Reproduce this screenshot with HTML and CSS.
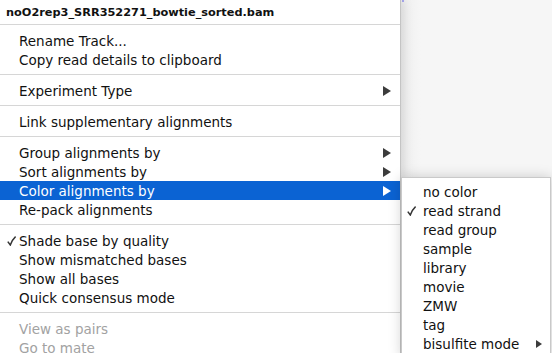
FILE: index.html
```html
<!DOCTYPE html>
<html>
	<head>
		<meta charset="UTF-8">
		<title>Track menu</title>
		<link rel="stylesheet" href="styles.css">
	</head>
	<body>
		<div class="screen">
			<div class="menu">
				<div class="title">noO2rep3_SRR352271_bowtie_sorted.bam</div>
				<div class="group">
					<div class="item">Rename Track...</div>
					<div class="item">Copy read details to clipboard</div>
				</div>
				<div class="sep"></div>
				<div class="group">
					<div class="item">Experiment Type<span class="arrow"></span></div>
				</div>
				<div class="sep"></div>
				<div class="group">
					<div class="item">Link supplementary alignments</div>
				</div>
				<div class="sep"></div>
				<div class="group">
					<div class="item">Group alignments by<span class="arrow"></span></div>
					<div class="item">Sort alignments by<span class="arrow"></span></div>
					<div class="item open">Color alignments by<span class="arrow"></span>
						<div class="submenu">
							<div class="item">no color</div>
							<div class="item"><span class="check"><svg width="9" height="10" viewBox="0 0 9 10"><path d="M0.8 5.6 L3.3 9 C4.6 5.6 6.4 2.6 8.6 0.6" /></svg></span>read strand</div>
							<div class="item">read group</div>
							<div class="item">sample</div>
							<div class="item">library</div>
							<div class="item">movie</div>
							<div class="item">ZMW</div>
							<div class="item">tag</div>
							<div class="item">bisulfite mode<span class="arrow small"></span></div>
						</div>
					</div>
					<div class="item">Re-pack alignments</div>
				</div>
				<div class="sep"></div>
				<div class="group">
					<div class="item"><span class="check"><svg width="9" height="10" viewBox="0 0 9 10"><path d="M0.8 5.6 L3.3 9 C4.6 5.6 6.4 2.6 8.6 0.6" /></svg></span>Shade base by quality</div>
					<div class="item">Show mismatched bases</div>
					<div class="item">Show all bases</div>
					<div class="item">Quick consensus mode</div>
				</div>
				<div class="sep"></div>
				<div class="group">
					<div class="item disabled">View as pairs</div>
					<div class="item disabled">Go to mate</div>
				</div>
			</div>
			<div class="desk"><span class="mark"></span></div>
		</div>
	</body>
</html>
```

FILE: styles.css
```css
html, body{
	margin: 0;
	height: 100%;
	overflow: hidden;
}
body{
	font-family: "DejaVu Sans", sans-serif;
	font-size: 13.5px;
	color: #111;
	background: #f6f6f6;
}
.screen{
	display: flex;
	height: 353px;
}
.menu{
	width: 400px;
	flex: none;
	background: #fff;
	border-right: 1px solid #c4c4c4;
	box-shadow: 2px 0 10px rgba(0,0,0,0.12);
	position: relative;
	z-index: 1;
}
.title{
	height: 24px;
	line-height: 25px;
	padding-left: 6px;
	font-weight: bold;
	font-size: 11.3px;
	border-bottom: 1px solid #d6d6d6;
}
.group{
	padding: 6px 0 5px;
}
.sep{
	height: 1px;
	background: #d6d6d6;
}
.item{
	height: 19px;
	line-height: 19px;
	padding-left: 19px;
	padding-top: 1px;
	box-sizing: border-box;
	display: flex;
	align-items: center;
	position: relative;
	white-space: nowrap;
}
.item.disabled{
	color: #a2a2a2;
}
.item.open{
	background: #0b63d3;
	color: #fff;
}
.arrow{
	margin-left: auto;
	margin-right: 9px;
	width: 0;
	height: 0;
	border-left: 8px solid #3c3c3c;
	border-top: 5px solid transparent;
	border-bottom: 5px solid transparent;
}
.item.open > .arrow{
	border-left-color: #fff;
}
.arrow.small{
	margin-right: 8px;
	border-left-width: 6px;
	border-top-width: 4px;
	border-bottom-width: 4px;
}
.check{
	position: absolute;
	left: 7px;
	top: 5px;
	height: 10px;
}
.check svg{
	display: block;
}
.check path{
	fill: none;
	stroke: #333;
	stroke-width: 1.5;
}
.submenu{
	position: absolute;
	left: 401px;
	top: -4px;
	width: 148px;
	padding: 4px 0;
	background: #fff;
	color: #111;
	border: 1px solid #c9c9c9;
	box-shadow: 0 0 12px rgba(0,0,0,0.18);
	z-index: 2;
}
.submenu .item{
	padding-left: 21px;
}
.submenu .check{
	left: 5px;
}
.desk{
	flex: 1;
	position: relative;
	background: linear-gradient(to right, #eeeeee, #f6f6f6 20px);
}
.mark{
	position: absolute;
	left: 1px;
	top: 0;
	width: 2px;
	height: 2px;
	background: #a8a8f0;
}
```
